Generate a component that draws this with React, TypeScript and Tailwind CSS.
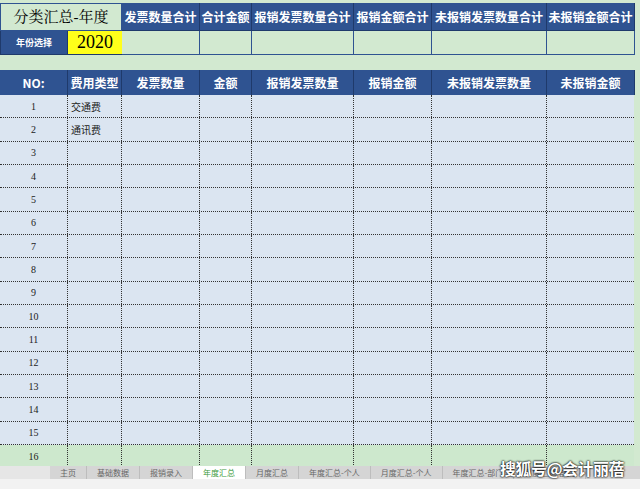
const cols = 'grid-cols-[68px_54px_78px_52px_102px_78px_115px_88px]';

const totals = ['发票数量合计', '合计金额', '报销发票数量合计', '报销金额合计', '未报销发票数量合计', '未报销金额合计'];
const heads = ['NO:', '费用类型', '发票数量', '金额', '报销发票数量', '报销金额', '未报销发票数量', '未报销金额'];
const types: Record<number, string> = { 1: '交通费', 2: '通讯费' };
const tabs = ['主页', '基础数据', '报销录入', '年度汇总', '月度汇总', '年度汇总-个人', '月度汇总-个人', '年度汇总-部门', '月度汇总-部门'];

const sans = "font-['Noto_Sans_CJK_SC','Noto_Sans',sans-serif]";
const serif = "font-['Liberation_Serif','Noto_Serif_CJK_SC','Noto_Sans_CJK_SC',serif]";

export default function App() {
    const rows = Array.from({ length: 16 }, (_, i) => i + 1);

    return (
        <div className={`relative h-[489px] w-[640px] overflow-hidden bg-[#d2e9d0] ${sans}`}>
            <div className="pt-[3px]">
                {/* Year summary block */}
                <div className={`grid w-[634px] ${cols} grid-rows-[28px_24px]`}>
                    <div className={`col-span-2 flex items-center justify-center border border-[#2f5391] bg-[#d2e9d0] text-[15px] text-black ${serif}`}>
                        分类汇总-年度
                    </div>
                    {totals.map((t) => (
                        <div
                            key={t}
                            className="flex items-center justify-center border-r border-b border-[#1f3a6b] bg-[#2f5391] text-[12px] font-bold whitespace-nowrap text-white"
                        >
                            {t}
                        </div>
                    ))}
                    <div className="flex items-center justify-center border-x border-b border-[#1f3a6b] bg-[#2f5391] text-[9px] font-bold text-white">
                        年份选择
                    </div>
                    <div className={`flex items-center justify-center border-b border-[#1f3a6b] bg-[#ffff1a] text-[18px] text-black ${serif}`}>
                        2020
                    </div>
                    {totals.map((t) => (
                        <div key={t} className="border-r border-b border-[#2f5391] bg-[#d2e9d0]" />
                    ))}
                </div>

                <div className="h-[15px]" />

                {/* Detail table */}
                <div className={`grid h-[25px] w-[634px] ${cols}`}>
                    {heads.map((h) => (
                        <div
                            key={h}
                            className="flex items-center justify-center border-r border-[#1f3a6b] bg-[#2f5391] text-[12px] font-bold whitespace-nowrap text-white"
                        >
                            {h}
                        </div>
                    ))}
                </div>
                <div className="h-[371px] w-[634px] overflow-hidden">
                    {rows.map((n) => (
                        <div
                            key={n}
                            className={`grid h-[23.33px] ${cols} ${n === 16 ? 'bg-[#cde8cd]' : 'bg-[#dbe5f1]'} border-b border-dotted border-[#333]`}
                        >
                            <div className={`flex items-center justify-center border-r border-dotted border-[#333] text-[10px] text-[#222] ${serif}`}>
                                {n}
                            </div>
                            <div className="flex items-center border-r border-dotted border-[#333] pl-[3px] text-[10px] text-[#222]">
                                {types[n] ?? ''}
                            </div>
                            {[0, 1, 2, 3, 4, 5].map((c) => (
                                <div key={c} className="border-r border-dotted border-[#333]" />
                            ))}
                        </div>
                    ))}
                </div>

                {/* Sheet tabs */}
                <div className="flex h-[13px] overflow-hidden bg-[#d5d5d5]">
                    <div className="w-[50px] shrink-0 bg-[#e6e6e6]" />
                    {tabs.map((t) => (
                        <div
                            key={t}
                            className={`flex shrink-0 items-center justify-center border-r border-[#bdbdbd] px-[10px] text-[8px] whitespace-nowrap ${
                                t === '年度汇总' ? 'bg-white text-[#3c9a3c]' : 'text-[#666]'
                            }`}
                        >
                            {t}
                        </div>
                    ))}
                </div>
                <div className="h-[10px] bg-[#f2f2f2]" />
            </div>

            <div className="absolute top-[458px] left-[500px] text-[16px] leading-[20px] font-bold tracking-[-0.5px] whitespace-nowrap text-white [text-shadow:0_0_2px_#000,0_0_2px_#000]">
                搜狐号@会计丽蓓
            </div>
        </div>
    );
}
